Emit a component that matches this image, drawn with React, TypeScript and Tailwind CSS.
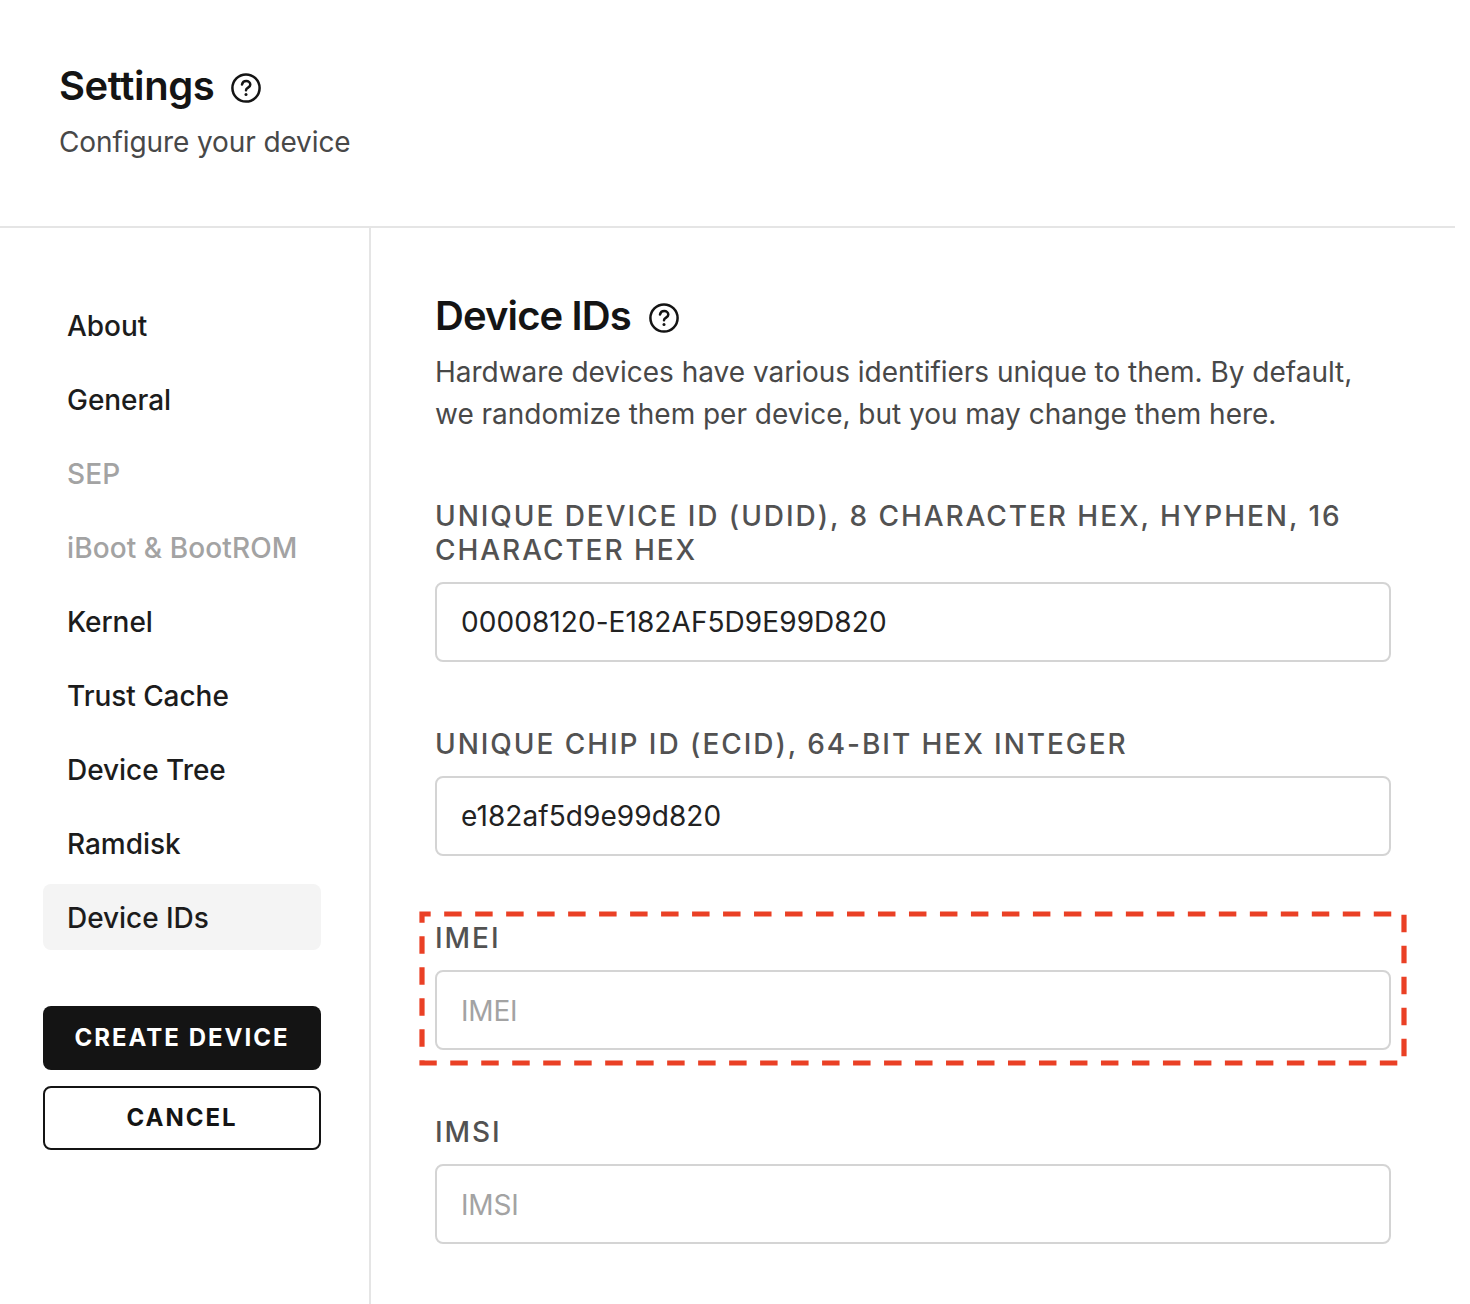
const navItems = [
  { label: "About" },
  { label: "General" },
  { label: "SEP", disabled: true },
  { label: "iBoot & BootROM", disabled: true },
  { label: "Kernel" },
  { label: "Trust Cache" },
  { label: "Device Tree" },
  { label: "Ramdisk" },
  { label: "Device IDs", active: true },
];

function HelpIcon() {
  return (
    <svg className="mt-1" width="32" height="32" viewBox="0 0 32 32" fill="none" stroke="#141414" strokeWidth="2.5">
      <circle cx="16" cy="16" r="13.6" />
      <path d="M12 12.5C12.5 10.4 14 9.1 16.2 9.1C18.600 9.1 20.300 10.700 20.300 12.800C20.300 15.600 16 15.600 16 18.200" strokeLinecap="round" />
      <circle cx="16" cy="22.6" r="1.5" fill="#141414" stroke="none" />
    </svg>
  );
}

function Field({
  label,
  value,
  placeholder,
}: {
  label: string;
  value?: string;
  placeholder?: string;
}) {
  return (
    <label className="block">
      <span className="block text-[28px] leading-[34px] font-medium tracking-[1.94px] text-[#525252]">
        {label}
      </span>
      <input
        className="mt-[15px] block h-20 w-full rounded-lg border-2 border-[#d4d4d4] bg-white px-6 text-[28px] tracking-[0.07px] text-[#222222] placeholder:tracking-[-0.2px] placeholder:text-[#a3a3a3] placeholder-shown:pt-0.5"
        defaultValue={value}
        placeholder={placeholder}
      />
    </label>
  );
}

export default function App() {
  return (
    <div className="h-[1304px] w-[1470px] overflow-hidden bg-white font-['Inter',sans-serif] text-[#141414]">
      <header className="h-[228px] w-[1455px] border-b-2 border-[#e5e5e5] pt-[62px] pl-[59px]">
        <div className="flex h-12 items-center gap-4">
          <h1 className="text-[40px] leading-[48px] font-semibold tracking-[-0.4px]">Settings</h1>
          <HelpIcon />
        </div>
        <p className="mt-[11px] text-[28px] leading-[42px] tracking-[-0.1px] text-[#484848]">
          Configure your device
        </p>
      </header>

      <div className="flex h-[1076px]">
        <aside className="w-[371px] border-r-2 border-[#e5e5e5] pt-16 pr-12 pl-[43px]">
          <nav className="flex flex-col gap-2">
            {navItems.map((item) => (
              <a
                key={item.label}
                className={`flex h-[66px] items-center rounded-lg px-6 pt-0.5 text-[28px] font-medium whitespace-nowrap ${
                  item.active ? "bg-[#f4f4f4]" : ""
                } ${item.disabled ? "tracking-[0.1px] text-[#a3a3a3]" : "tracking-[-0.05px] text-[#1c1c1c]"}`}
              >
                {item.label}
              </a>
            ))}
          </nav>

          <button className="mt-14 block h-16 w-full rounded-lg bg-[#141414] text-2xl font-bold tracking-[2px] text-white">
            CREATE DEVICE
          </button>
          <button className="mt-4 block h-16 w-full rounded-lg border-2 border-[#141414] text-2xl font-bold tracking-[2px]">
            CANCEL
          </button>
        </aside>

        <main className="w-[1020px] pt-16 pl-16">
          <div className="flex h-12 items-center gap-[17px]">
            <h2 className="text-[40px] leading-[48px] font-semibold tracking-[-0.9px]">Device IDs</h2>
            <HelpIcon />
          </div>
          <p className="mt-[11px] text-[28px] leading-[42px] tracking-[-0.02px] whitespace-nowrap text-[#484848]">
            Hardware devices have various identifiers unique to them. By default,
            <br />
            we randomize them per device, but you may change them here.
          </p>

          <div className="mt-16 flex flex-col gap-[65px]">
            <Field
              label="UNIQUE DEVICE ID (UDID), 8 CHARACTER HEX, HYPHEN, 16 CHARACTER HEX"
              value="00008120-E182AF5D9E99D820"
            />
            <Field label="UNIQUE CHIP ID (ECID), 64-BIT HEX INTEGER" value="e182af5d9e99d820" />
            <div className="relative">
              <Field label="IMEI" placeholder="IMEI" />
              {/* highlight around the IMEI field */}
              <svg
                className="pointer-events-none absolute top-[-10px] left-[-16px]"
                width="988"
                height="155"
                fill="none"
                stroke="#ea4025"
                strokeWidth="5.2"
              >
                <path
                  d="M3 3h982v149H3z"
                  strokeDasharray="17.486 13.5"
                  strokeDashoffset="8.8"
                />
              </svg>
            </div>
            <Field label="IMSI" placeholder="IMSI" />
          </div>
        </main>
      </div>
    </div>
  );
}
